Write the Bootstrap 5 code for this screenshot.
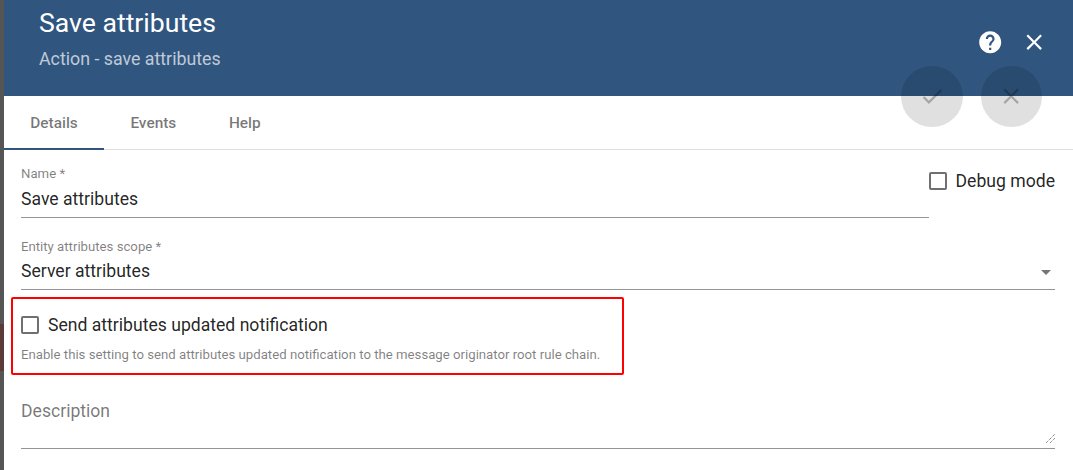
<!DOCTYPE html>
<html lang="en">
<head>
    <meta charset="UTF-8">
    <title>Save attributes</title>
    <link href="https://cdn.jsdelivr.net/npm/bootstrap@5.3.0/dist/css/bootstrap.min.css" rel="stylesheet">
    <style>
        html, body { height: 470px; overflow: hidden; }
        body { background: #fff; font-family: Roboto, sans-serif; color: rgba(0,0,0,.87); }
        .left-edge { width: 4px; height: 470px; background: #555; flex: none; padding-top: 324px; }
        .edge-patch { height: 47px; background: #5c3a38; }
        .panel { min-width: 0; }
        .panel-head { height: 96px; background: #305680; color: #fff; padding-left: 35px; padding-right: 26px; }
        .panel-title { font-size: 26.6px; line-height: 32px; margin-top: 7px; }
        .panel-sub { font-size: 17.8px; line-height: 24px; margin-top: 8px; color: rgba(255,255,255,.7); }
        .head-icons { gap: 17.6px; margin-top: 28.5px; }
        .head-icons svg { display: block; }
        .fab-row { position: absolute; top: 66px; right: 31px; gap: 18px; }
        .fab-round { width: 61.5px; height: 61px; border-radius: 50%; background: rgba(0,0,0,.12); border: 0; padding: 0; }
        .tab-bar { height: 54px; border-bottom: 1px solid #e0e0e0; }
        .tab-item { height: 54px; padding: 0 26.3px; font-size: 15.4px; font-weight: 500; line-height: 54px; text-align: center; color: rgba(0,0,0,.54); }
        .tab-item.tab-on { border-bottom: 2px solid #305680; }
        .form-area { padding: 0 18px 0 17px; }
        .field-label { font-size: 13.2px; line-height: 16px; color: rgba(0,0,0,.5); }
        .field-value { font-size: 17.6px; line-height: 24px; }
        .field-line { border-bottom: 1px solid #949494; }
        .name-field { height: 68px; padding-top: 16px; }
        .name-field .field-label { margin-bottom: 5px; }
        .scope-field { height: 67px; margin-top: 5px; padding-top: 16px; }
        .scope-field .field-label { margin-bottom: 4px; }
        .debug-box { padding-top: 19px; width: 126px; flex: none; justify-content: flex-end; white-space: nowrap; }
        .tick-box { width: 18px; height: 18px; border: 2px solid #707070; border-radius: 2px; flex: none; }
        .box-row { gap: 9px; }
        .check-text { font-size: 17.6px; line-height: 24px; }
        .select-arrow { width: 0; height: 0; border-left: 5.5px solid transparent; border-right: 5.5px solid transparent; border-top: 5.5px solid #757575; margin: 11px 4px 0 0; }
        .red-box { width: 613px; height: 78px; margin: 7px 0 0 -10px; padding: 14px 0 0 8px; border: 2px solid #f00; border-radius: 2px; }
        .hint-text { font-size: 13.2px; line-height: 16px; color: rgba(0,0,0,.5); margin-top: 10px; }
        .desc-field { height: 64px; margin-top: 10px; padding-top: 14px; font-size: 17.6px; line-height: 24px; color: rgba(0,0,0,.54); position: relative; }
        .resize-grip { position: absolute; right: 0; bottom: 5px; display: block; }
    </style>
</head>
<body>
    <div class="d-flex">
        <div class="left-edge"><div class="edge-patch"></div></div>
        <div class="panel flex-grow-1 position-relative">
            <div class="panel-head d-flex justify-content-between">
                <div>
                    <div class="panel-title">Save attributes</div>
                    <div class="panel-sub">Action - save attributes</div>
                </div>
                <div class="head-icons d-flex align-items-start">
                    <svg width="26.4" height="26.4" viewBox="0 0 24 24"><path fill="#fff" d="M12 2C6.48 2 2 6.48 2 12s4.48 10 10 10 10-4.48 10-10S17.52 2 12 2zm1 17h-2v-2h2v2zm2.07-7.75l-.9.92C13.45 12.9 13 13.5 13 15h-2v-.5c0-1.100.45-2.100 1.170-2.830l1.240-1.260c.37-.360.590-.860.590-1.410 0-1.100-.9-2-2-2s-2 .9-2 2H8c0-2.210 1.790-4 4-4s4 1.790 4 4c0 .880-.360 1.680-.930 2.250z"/></svg>
                    <svg width="26.4" height="26.4" viewBox="0 0 24 24"><path fill="#fff" d="M19 6.410L17.590 5 12 10.590 6.410 5 5 6.410 10.590 12 5 17.590 6.410 19 12 13.410 17.590 19 19 17.590 13.410 12z"/></svg>
                </div>
            </div>
            <div class="fab-row d-flex">
                <button class="fab-round d-flex align-items-center justify-content-center"><svg width="26.4" height="26.4" viewBox="0 0 24 24"><path fill="rgba(0,0,0,.26)" d="M9 16.170L4.830 12l-1.420 1.410L9 19 21 7l-1.410-1.410z"/></svg></button>
                <button class="fab-round d-flex align-items-center justify-content-center"><svg width="26.4" height="26.4" viewBox="0 0 24 24"><path fill="rgba(0,0,0,.26)" d="M19 6.410L17.590 5 12 10.590 6.410 5 5 6.410 10.590 12 5 17.590 6.410 19 12 13.410 17.590 19 19 17.590 13.410 12z"/></svg></button>
            </div>
            <div class="tab-bar d-flex">
                <div class="tab-item tab-on">Details</div>
                <div class="tab-item">Events</div>
                <div class="tab-item">Help</div>
            </div>
            <div class="form-area">
                <div class="d-flex">
                    <div class="name-field field-line flex-grow-1">
                        <div class="field-label">Name *</div>
                        <div class="field-value">Save attributes</div>
                    </div>
                    <div class="debug-box box-row d-flex align-items-center align-self-start">
                        <span class="tick-box"></span>
                        <span class="check-text">Debug mode</span>
                    </div>
                </div>
                <div class="scope-field field-line">
                    <div class="field-label">Entity attributes scope *</div>
                    <div class="d-flex justify-content-between">
                        <div class="field-value">Server attributes</div>
                        <div class="select-arrow"></div>
                    </div>
                </div>
                <div class="red-box">
                    <div class="box-row d-flex align-items-center">
                        <span class="tick-box"></span>
                        <span class="check-text">Send attributes updated notification</span>
                    </div>
                    <div class="hint-text">Enable this setting to send attributes updated notification to the message originator root rule chain.</div>
                </div>
                <div class="desc-field field-line">
                    Description
                    <svg class="resize-grip" width="9" height="9" viewBox="0 0 9 9"><path stroke="#555" stroke-width="1" stroke-dasharray="1 1" fill="none" d="M0 9L9 0M4 9L9 4"/></svg>
                </div>
            </div>
        </div>
    </div>
    <script src="https://cdn.jsdelivr.net/npm/bootstrap@5.3.0/dist/js/bootstrap.bundle.min.js"></script>
</body>
</html>
